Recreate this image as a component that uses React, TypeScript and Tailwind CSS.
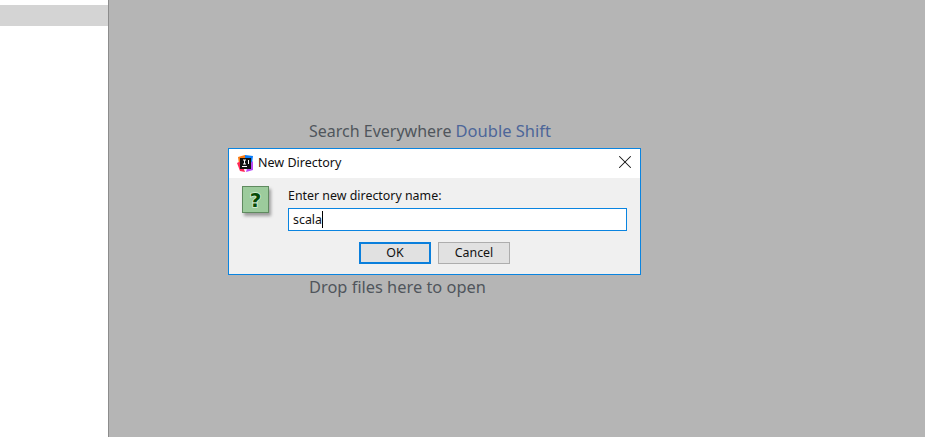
import { X } from "lucide-react";

function IdeaIcon() {
	return (
		<svg width="17" height="17" viewBox="0 0 17 17" className="shrink-0">
			<path d="M1 2 L8 0 L8 8 L2 9 Z" fill="#f97a12" />
			<path d="M8 0 L16 1 L15 8 L8 8 Z" fill="#087cfa" />
			<path d="M0 8 L3 16 L8 17 L4 6 Z" fill="#fe2857" />
			<path d="M9 17 L16 15 L16 6 L11 10 Z" fill="#b74af7" />
			<rect x="3" y="3" width="11" height="11" fill="#111" />
			<rect x="5" y="11" width="5" height="1" fill="#fff" />
			<path d="M6 5 H9 M7.5 5 V9 M6 9 H9 M11.5 5 V9" stroke="#fff" strokeWidth="1" fill="none" />
		</svg>
	);
}

function QuestionIcon() {
	return (
		<div className="flex h-[27px] w-[27px] shrink-0 items-center justify-center border border-[#5f8a5f] bg-[#9ccb9c] shadow-[2px_3px_3px_rgba(0,0,0,0.35)]">
			<span className="font-['DejaVu_Sans',sans-serif] text-[20px] leading-none font-bold text-[#064a06] [-webkit-text-stroke:1.5px_#d8f0d8] [paint-order:stroke_fill]">
				?
			</span>
		</div>
	);
}

function NewDirectoryDialog() {
	return (
		<div className="absolute top-[148px] left-[228px] flex h-[127px] w-[413px] flex-col border border-[#0a84e0] bg-[#f0f0f0] font-['Noto_Sans',sans-serif] text-[12.4px] text-[#111]">
			<div className="flex h-[29px] items-center bg-white pr-[4px] pl-[8px]">
				<IdeaIcon />
				<span className="ml-[4px] flex-1 text-[12.5px]">New Directory</span>
				<X className="mb-[3px] h-[22px] w-[22px]" strokeWidth={1.1} />
			</div>
			<div className="flex flex-1 px-[13px] pt-[8px]">
				<QuestionIcon />
				<div className="ml-[19px] flex flex-1 flex-col">
					<label className="h-[22px] leading-[19px]">Enter new directory name:</label>
					<div className="flex h-[23px] w-[339px] items-center border border-[#0a84e0] bg-white pl-[4px]">
						<span className="pt-[2px]">scala</span>
						<span className="h-[17px] w-px bg-black" />
					</div>
					<div className="mt-[11px] ml-[71px] flex gap-[7px]">
						<button className="h-[22px] w-[72px] border-2 border-[#0a7fdc] bg-[#e1e1e1] text-center leading-[16px]">
							OK
						</button>
						<button className="h-[22px] w-[72px] border border-[#adadad] bg-[#e1e1e1] text-center leading-[18px]">
							Cancel
						</button>
					</div>
				</div>
			</div>
		</div>
	);
}

export default function App() {
	return (
		<div className="relative flex h-[437px] w-[925px] overflow-hidden bg-white font-['Noto_Sans',sans-serif]">
			{/* Project tree */}
			<aside className="w-[108px] shrink-0 pt-[5px]">
				<div className="h-[21px] bg-[#d4d4d4]" />
			</aside>
			<div className="w-px shrink-0 bg-[#8c8c8c]" />

			{/* Editor empty state */}
			<main className="flex-1 bg-[#b5b5b5] pt-[120px] pl-[200px] text-[16.4px] leading-[22px] text-[#50555c]">
				<p className="text-[16px]">
					Search Everywhere <span className="text-[16.5px] text-[#4d6699]">Double Shift</span>
				</p>
				<p className="mt-[134px]">Drop files here to open</p>
			</main>

			<NewDirectoryDialog />
		</div>
	);
}
